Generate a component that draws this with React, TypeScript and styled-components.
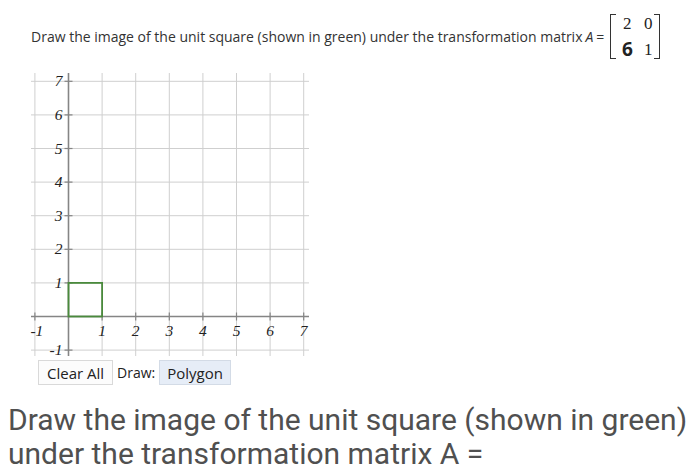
import React from 'react'
import styled, { createGlobalStyle } from 'styled-components'

const GlobalStyle = createGlobalStyle`
  body {
    margin: 0;
    background: #ffffff;
  }
`

const Page = styled.div`
  width: 700px;
  height: 474px;
  overflow: hidden;
  font-family: 'Open Sans', 'Liberation Sans', sans-serif;
  color: #333333;
`

const Prompt = styled.div`
  display: flex;
  align-items: center;
  padding: 14px 0 0 31px;
  font-size: 14px;
  height: 44px;
`

const MathVar = styled.i`
  font-style: italic;
  margin-left: 3px;
`

const Equals = styled.span`
  margin: 0 6px 0 3px;
`

const Matrix = styled.div`
  display: flex;
  align-items: center;
`

const Bracket = styled.div<{ $side: 'left' | 'right' }>`
  width: 5px;
  height: 43px;
  border: 1.5px solid #333333;
  ${(p) => (p.$side === 'left' ? 'border-right: none;' : 'border-left: none;')}
`

const Cells = styled.div`
  display: grid;
  grid-template-columns: 12px 12px;
  column-gap: 9px;
  row-gap: 5px;
  padding: 0 0 0 5px;
`

const Cell = styled.span<{ $bold?: boolean }>`
  font-family: ${(p) =>
    p.$bold ? "'Open Sans', sans-serif" : "'Liberation Serif', serif"};
  font-weight: ${(p) => (p.$bold ? 700 : 400)};
  font-size: ${(p) => (p.$bold ? '19px' : '17px')};
  line-height: 21px;
  text-align: center;
  color: #222222;
`

const GraphWrap = styled.div`
  margin: 8px 0 0 20px;
  width: 300px;
  height: 294px;
`

const Toolbar = styled.div`
  display: flex;
  align-items: center;
  gap: 4px;
  margin: 0 0 0 38px;
`

const ToolButton = styled.button<{ $active?: boolean }>`
  font-family: 'Open Sans', 'Liberation Sans', sans-serif;
  font-size: 15px;
  color: #222222;
  height: 25px;
  padding: 0 ${(p) => (p.$active ? '7px' : '8px')};
  border: 1px solid ${(p) => (p.$active ? '#d3dbe6' : '#d9d9d9')};
  background: ${(p) => (p.$active ? '#e6edf7' : '#fcfcfc')};
  border-radius: 0;
`

const DrawLabel = styled.span`
  font-size: 14px;
  color: #222222;
`

const BigText = styled.div`
  margin: 18px 0 0 8px;
  font-family: Roboto, 'Liberation Sans', Arial, sans-serif;
  font-size: 30px;
  line-height: 34px;
  color: #505050;
  width: 692px;
`

const U = 33.6
const OX = 48.5
const OY = 250.5
const range = [-1, 0, 1, 2, 3, 4, 5, 6, 7]

const Graph = () => {
  const gx = (i: number) => OX + U * i
  const gy = (j: number) => OY - U * j
  return (
    <svg width={300} height={294} viewBox="0 0 300 294">
      {range.map((i) => (
        <line
          key={'v' + i}
          x1={gx(i)}
          x2={gx(i)}
          y1={7}
          y2={290}
          stroke="#cfcfcf"
          strokeWidth={1}
        />
      ))}
      {range.map((j) => (
        <line
          key={'h' + j}
          x1={11}
          x2={289}
          y1={gy(j)}
          y2={gy(j)}
          stroke="#cfcfcf"
          strokeWidth={1}
        />
      ))}
      <line x1={11} x2={289} y1={OY} y2={OY} stroke="#858585" strokeWidth={1.6} />
      <line x1={OX} x2={OX} y1={7} y2={290} stroke="#858585" strokeWidth={1.6} />
      {range
        .filter((n) => n !== 0)
        .map((n) => (
          <g key={'t' + n} stroke="#858585" strokeWidth={1.2}>
            <line x1={gx(n)} x2={gx(n)} y1={OY - 4} y2={OY + 4} />
            <line x1={OX - 4} x2={OX + 4} y1={gy(n)} y2={gy(n)} />
          </g>
        ))}
      <g
        fontFamily="'Liberation Serif', serif"
        fontStyle="italic"
        fontSize={15.5}
        fill="#222222"
      >
        {range
          .filter((n) => n !== 0)
          .map((n) => (
            <text key={'xl' + n} x={gx(n) + (n < 0 ? 2 : 0)} y={OY + 19} textAnchor="middle">
              {n}
            </text>
          ))}
        {range
          .filter((n) => n !== 0)
          .map((n) => (
            <text key={'yl' + n} x={OX - 6} y={gy(n) + 5} textAnchor="end">
              {n}
            </text>
          ))}
      </g>
      <rect
        x={OX}
        y={gy(1)}
        width={U}
        height={U}
        fill="none"
        stroke="#4a8a3c"
        strokeWidth={1.8}
      />
    </svg>
  )
}

const App = () => {
  return (
    <Page>
      <GlobalStyle />
      <Prompt>
        Draw the image of the unit square (shown in green) under the
        transformation matrix
        <MathVar>A</MathVar>
        <Equals>=</Equals>
        <Matrix>
          <Bracket $side="left" />
          <Cells>
            <Cell>2</Cell>
            <Cell>0</Cell>
            <Cell $bold>6</Cell>
            <Cell>1</Cell>
          </Cells>
          <Bracket $side="right" />
        </Matrix>
      </Prompt>
      <GraphWrap>
        <Graph />
      </GraphWrap>
      <Toolbar>
        <ToolButton>Clear All</ToolButton>
        <DrawLabel>Draw:</DrawLabel>
        <ToolButton $active>Polygon</ToolButton>
      </Toolbar>
      <BigText>
        Draw the image of the unit square (shown in green) under the
        transformation matrix A =
      </BigText>
    </Page>
  )
}

export default App
